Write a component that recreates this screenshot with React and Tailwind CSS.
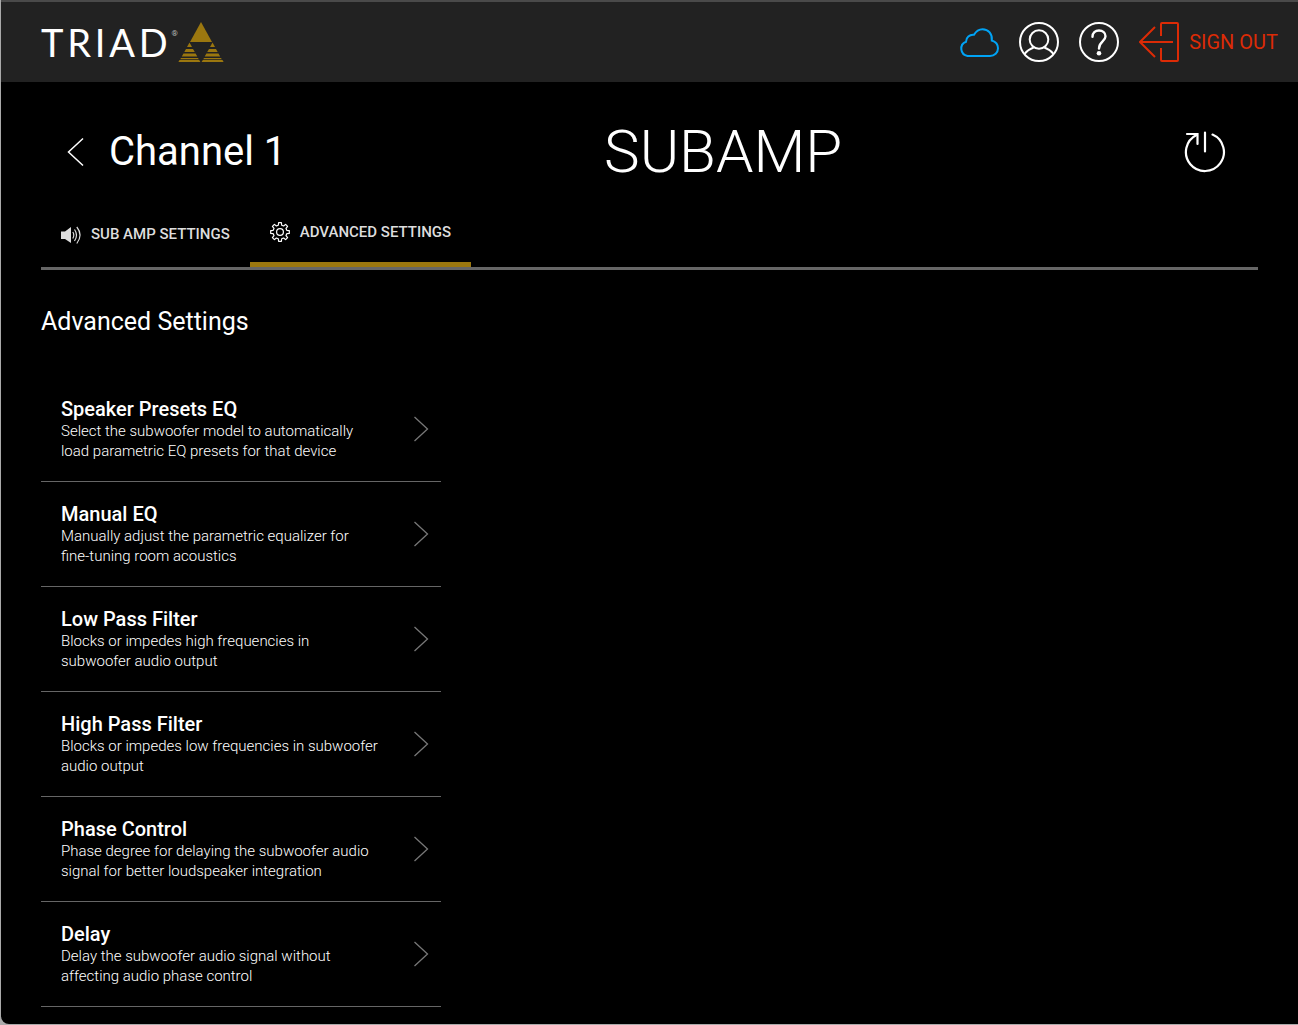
import React from 'react';

const tabs = [
  { label: 'SUB AMP SETTINGS', icon: SpeakerIcon, active: false },
  { label: 'ADVANCED SETTINGS', icon: GearIcon, active: true },
];

const settings = [
  {
    title: 'Speaker Presets EQ',
    description: 'Select the subwoofer model to automatically load parametric EQ presets for that device',
  },
  {
    title: 'Manual EQ',
    description: 'Manually adjust the parametric equalizer for fine-tuning room acoustics',
  },
  {
    title: 'Low Pass Filter',
    description: 'Blocks or impedes high frequencies in subwoofer audio output',
  },
  {
    title: 'High Pass Filter',
    description: 'Blocks or impedes low frequencies in subwoofer audio output',
  },
  {
    title: 'Phase Control',
    description: 'Phase degree for delaying the subwoofer audio signal for better loudspeaker integration',
  },
  {
    title: 'Delay',
    description: 'Delay the subwoofer audio signal without affecting audio phase control',
  },
];

function TriadMark() {
  return (
    <svg viewBox="0 0 46 40" className="h-10 w-[46px]" fill="#9b770f" aria-hidden="true">
      <path d="M23 0 34 20H12Z" />
      <path d="M11.500 20.500 14 25H9ZM8 27H15L16.800 30H6.300ZM5.500 31.500H17.600L19.300 34.500H3.800ZM3 36H20L20.800 37.300H2.200ZM1.500 38H21.200L22.400 40H.4Z" />
      <path d="M34.500 20.500 37 25H32ZM31 27H38L39.700 30H29.200ZM28.400 31.500H40.500L42.200 34.500H26.700ZM26 36H43L43.800 37.300H25.200ZM24.800 38H44.500L45.600 40H23.600Z" />
    </svg>
  );
}

function CloudIcon() {
  return (
    <svg viewBox="0 0 40 40" className="size-10" fill="none" stroke="#00a3f5" strokeWidth="2" aria-hidden="true">
      <path d="M8.500 34A7.400 7.400 0 0 1 7 19.800C7 15.500 10.500 12.300 15 12.800C17.200 9 20 7.200 23.500 7.200C29.500 7.200 33.500 12 32.800 18.500C36.500 19.700 39 22.800 39 26.300C39 30.700 35.500 34 31 34Z" />
    </svg>
  );
}

function UserIcon() {
  return (
    <svg viewBox="0 0 40 40" className="size-10" fill="none" stroke="#fff" strokeWidth="2" aria-hidden="true">
      <circle cx="20" cy="20" r="19" />
      <circle cx="20" cy="17.500" r="9.300" />
      <path d="M5.500 32C8 28.800 11 26.700 14.700 25.500M25.300 25.500C29 26.700 32 28.800 34.500 32" />
    </svg>
  );
}

function HelpIcon() {
  return (
    <svg viewBox="0 0 40 40" className="size-10" fill="none" stroke="#fff" strokeWidth="2.400" aria-hidden="true">
      <circle cx="20" cy="20" r="19" strokeWidth="2" />
      <path d="M13.500 14.800C13.500 10.800 16.200 8.500 20 8.500C23.800 8.500 26.500 10.800 26.500 14.200C26.500 19.500 20 19.500 20 26.500" strokeLinecap="round" />
      <circle cx="20" cy="31.200" r="2.300" fill="#fff" stroke="none" />
    </svg>
  );
}

function SignOutIcon() {
  return (
    <svg viewBox="0 0 40 40" className="size-10" fill="none" stroke="currentColor" strokeWidth="2" aria-hidden="true">
      <path d="M22 14V2Q22 1 23 1H38Q39 1 39 2V38Q39 39 38 39H23Q22 39 22 38V26" />
      <path d="M34 20H1M16 5 1 20 16 35" />
    </svg>
  );
}

function PowerIcon() {
  return (
    <svg viewBox="0 0 42 42" className="size-[42px]" fill="none" stroke="#fff" strokeWidth="2.200" strokeLinecap="round" aria-hidden="true">
      <path d="M12.500 4A19 19 0 1 0 28.500 3.600" />
      <path d="M3 3H13.500V13M21 1.500V20.500" />
    </svg>
  );
}

function SpeakerIcon() {
  return (
    <svg viewBox="0 0 20 20" className="size-5" fill="none" stroke="#ddd" strokeWidth="1.200" aria-hidden="true">
      <path d="M0 6.500H4L10 2V18L4 14H0Z" fill="#ddd" stroke="none" />
      <path d="M11.800 7Q13.800 10 11.800 13.500M13.500 4.500Q17.500 10 13.500 16M15.800 2Q22.300 10 15.800 18.500" />
    </svg>
  );
}

function GearIcon() {
  return (
    <svg viewBox="0 0 20 20" className="size-5" fill="none" stroke="#fff" strokeWidth="1.200" strokeLinejoin="round" aria-hidden="true">
      <path d="M8.600.7H11.400L11.700 3.200 13.600 4 15.600 2.400 17.600 4.400 16 6.400 16.800 8.300 19.300 8.600V11.400L16.800 11.700 16 13.600 17.600 15.600 15.600 17.600 13.600 16 11.700 16.800 11.400 19.300H8.600L8.300 16.800 6.400 16 4.400 17.600 2.400 15.600 4 13.600 3.200 11.700.7 11.400V8.600L3.200 8.300 4 6.400 2.400 4.400 4.400 2.400 6.400 4 8.300 3.200Z" />
      <circle cx="10" cy="10" r="3.400" />
    </svg>
  );
}

function Header() {
  return (
    <header className="flex h-[82px] items-center justify-between border-t-2 border-[#4a4a4a] bg-[#222] pr-5 pl-10">
      <a href="#home" className="flex items-center" aria-label="Triad home">
        <span className="font-['Lato',sans-serif] text-[38px] leading-10 tracking-widest">TRIAD</span>
        <span className="self-start pt-2 text-[8px] leading-2 text-[#bbb]">®</span>
        <TriadMark />
      </a>
      <div className="flex items-center gap-5">
        <button type="button" aria-label="Cloud"><CloudIcon /></button>
        <button type="button" aria-label="Account"><UserIcon /></button>
        <button type="button" aria-label="Help"><HelpIcon /></button>
        <button type="button" className="flex items-center gap-2.5 text-xl text-[#dc2b06]">
          <SignOutIcon />
          SIGN OUT
        </button>
      </div>
    </header>
  );
}

function SettingRow({ title, description }) {
  return (
    <li className="border-b border-[#666]">
      <button type="button" className="flex w-full items-center justify-between py-5 pr-3 pl-5 text-left">
        <span className="block w-[318px]">
          <span className="block text-xl leading-6 font-medium">{title}</span>
          <span className="block text-[15px] leading-5 font-light">{description}</span>
        </span>
        <svg viewBox="0 0 16 26" className="h-[26px] w-4" fill="none" stroke="#777" strokeWidth="1.300" aria-hidden="true">
          <path d="M1.500 1 14.500 13 1.500 25" />
        </svg>
      </button>
    </li>
  );
}

export default function App() {
  return (
    <div className="bg-[#aaa] pb-px pl-px">
      <div className="min-h-[calc(100vh-1px)] overflow-hidden rounded-bl-lg bg-black font-['Roboto',sans-serif] text-white">
        <Header />

        <main className="px-10">
          <div className="flex items-center justify-between pt-[30px] pr-2 pl-[26px]">
            <div className="flex items-center gap-6">
              <button type="button" aria-label="Back">
                <svg viewBox="0 0 18 30" className="h-[30px] w-[18px]" fill="none" stroke="#fff" strokeWidth="1.500" aria-hidden="true">
                  <path d="M16 1.500 1.500 15 16 28.500" />
                </svg>
              </button>
              <h2 className="text-[40px] leading-[80px]">Channel 1</h2>
            </div>
            <h1 className="text-6xl leading-[80px] font-light">SUBAMP</h1>
            <button type="button" className="px-6" aria-label="Power"><PowerIcon /></button>
          </div>

          {/* Tabs */}
          <nav className="mt-2.5 flex border-b-[3px] border-[#666]">
            {tabs.map((tab) => {
              const Icon = tab.icon;

              return (
                <button
                  key={tab.label}
                  type="button"
                  className={`flex h-[65px] items-center gap-2.5 px-5 text-[15px] font-medium text-[#ddd] ${tab.active ? 'border-b-[5px] border-[#9b770f]' : ''}`}
                >
                  <Icon />
                  {tab.label}
                </button>
              );
            })}
          </nav>

          <h3 className="pt-9 text-[25px] leading-8">Advanced Settings</h3>

          <ul className="mt-[39px] w-[400px] max-w-full">
            {settings.map((item) => (
              <SettingRow key={item.title} {...item} />
            ))}
          </ul>
        </main>
      </div>
    </div>
  );
}
